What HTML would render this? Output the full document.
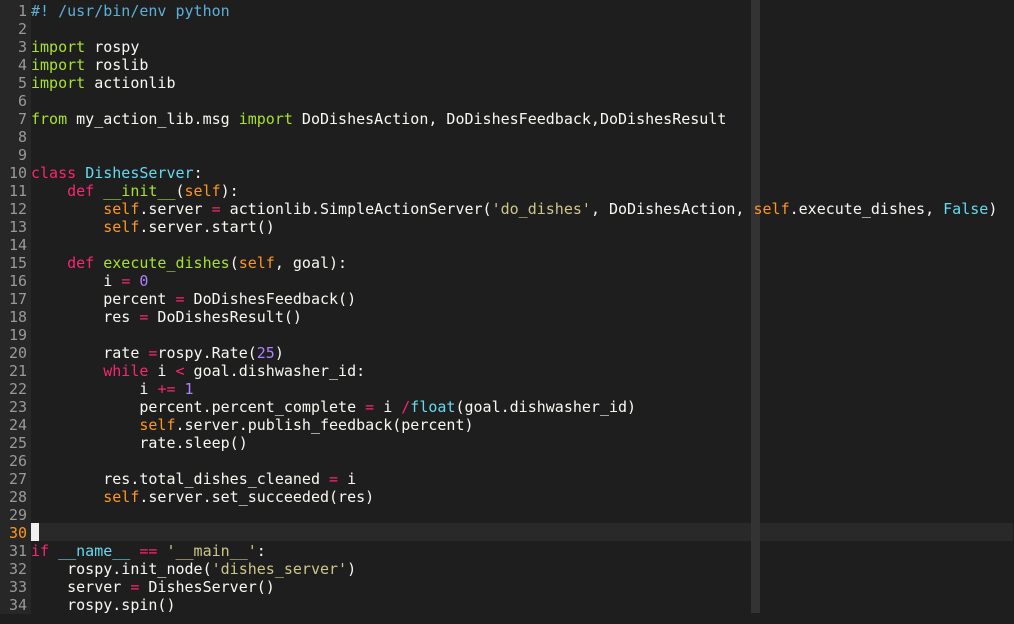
<!DOCTYPE html>
<html><head><meta charset="utf-8"><style>
html,body{margin:0;padding:0;background:#1e1e1e;width:1014px;height:624px;overflow:hidden}
.g{position:absolute;left:0;top:0;width:31px;height:614px;background:#272727}
.ln{position:absolute;left:0;top:2px;width:27px;text-align:right;font:15px/18px "DejaVu Sans Mono",monospace;color:#9a9a9a;white-space:pre}
.hl{position:absolute;left:31px;top:523px;width:982px;height:18px;background:#292929}
.ru{position:absolute;left:751px;top:0;width:9px;height:613px;background:#333}
.cur{position:absolute;left:31px;top:523px;width:8px;height:18px;background:#f0f0f0}
pre{position:absolute;left:31px;top:2px;margin:0;font:15px/18px "DejaVu Sans Mono",monospace;color:#f8f8f2}
.k{color:#a6e22e}.p{color:#f92672}.s{color:#fd971f}.b{color:#66d9ef}.n{color:#ae81ff}.st{color:#cfc68a}.c{color:#5db0d8}.f{color:#a6e22e}
</style></head><body>
<div class="g"></div>
<div class="hl"></div>
<div class="ru"></div>
<div class="ln">1
2
3
4
5
6
7
8
9
10
11
12
13
14
15
16
17
18
19
20
21
22
23
24
25
26
27
28
29
<span style="color:#fd971f">30</span>
31
32
33
34</div>
<div class="cur"></div>
<pre><span class="c">#! /usr/bin/env python</span>

<span class="k">import</span> rospy
<span class="k">import</span> roslib
<span class="k">import</span> actionlib

<span class="k">from</span> my_action_lib.msg <span class="k">import</span> DoDishesAction, DoDishesFeedback,DoDishesResult


<span class="p">class</span> <span class="b">DishesServer</span>:
    <span class="p">def</span> <span class="f">__init__</span>(<span class="s">self</span>):
        <span class="s">self</span>.server <span class="p">=</span> actionlib.SimpleActionServer(<span class="st">'do_dishes'</span>, DoDishesAction, <span class="s">self</span>.execute_dishes, <span class="b">False</span>)
        <span class="s">self</span>.server.start()

    <span class="p">def</span> <span class="f">execute_dishes</span>(<span class="s">self</span>, goal):
        i <span class="p">=</span> <span class="n">0</span>
        percent <span class="p">=</span> DoDishesFeedback()
        res <span class="p">=</span> DoDishesResult()

        rate <span class="p">=</span>rospy.Rate(<span class="n">25</span>)
        <span class="p">while</span> i <span class="p">&lt;</span> goal.dishwasher_id:
            i <span class="p">+=</span> <span class="n">1</span>
            percent.percent_complete <span class="p">=</span> i <span class="p">/</span><span class="b">float</span>(goal.dishwasher_id)
            <span class="s">self</span>.server.publish_feedback(percent)
            rate.sleep()

        res.total_dishes_cleaned <span class="p">=</span> i
        <span class="s">self</span>.server.set_succeeded(res)


<span class="p">if</span> <span class="b">__name__</span> <span class="p">==</span> <span class="st">'__main__'</span>:
    rospy.init_node(<span class="st">'dishes_server'</span>)
    server <span class="p">=</span> DishesServer()
    rospy.spin()</pre>
</body></html>
